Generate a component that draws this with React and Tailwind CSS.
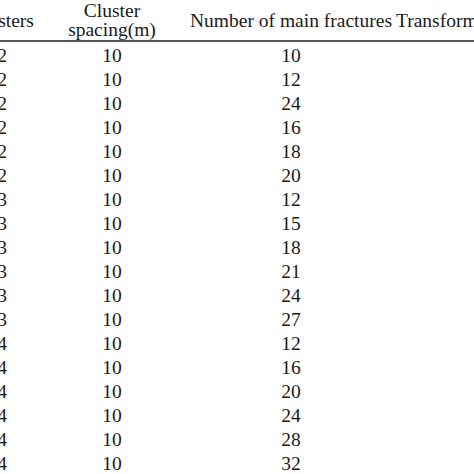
import React from "react";

const rows = [
  [2, 10, 10],
  [2, 10, 12],
  [2, 10, 24],
  [2, 10, 16],
  [2, 10, 18],
  [2, 10, 20],
  [3, 10, 12],
  [3, 10, 15],
  [3, 10, 18],
  [3, 10, 21],
  [3, 10, 24],
  [3, 10, 27],
  [4, 10, 12],
  [4, 10, 16],
  [4, 10, 20],
  [4, 10, 24],
  [4, 10, 28],
  [4, 10, 32],
];

export default function App() {
  return (
    <div
      className="w-[474px] h-[474px] overflow-hidden bg-white text-[#1a1a1a] text-[19.5px]"
      style={{ fontFamily: '"Liberation Serif", "Times New Roman", serif' }}
    >
      <div className="-ml-[60px] w-[600px]">
        {/* header */}
        <div className="flex items-center h-[40px] leading-[19px] whitespace-nowrap">
          <div className="w-[124px] text-center">Clusters</div>
          <div className="w-[96px] text-center">
            <div>Cluster</div>
            <div>spacing(m)</div>
          </div>
          <div className="w-[206px] ml-[28px] text-center">Number of main fractures</div>
          <div className="pl-[2px]">Transformation</div>
        </div>
        <div className="h-[1.5px] bg-[#555]" />
        <div className="pt-[2px]">
          {rows.map((r, i) => (
            <div key={i} className="flex items-center h-[24px] leading-[24px]">
              <div className="w-[124px] text-center">{r[0]}</div>
              <div className="w-[96px] text-center">{r[1]}</div>
              <div className="w-[206px] ml-[28px] text-center">{r[2]}</div>
            </div>
          ))}
        </div>
      </div>
    </div>
  );
}
